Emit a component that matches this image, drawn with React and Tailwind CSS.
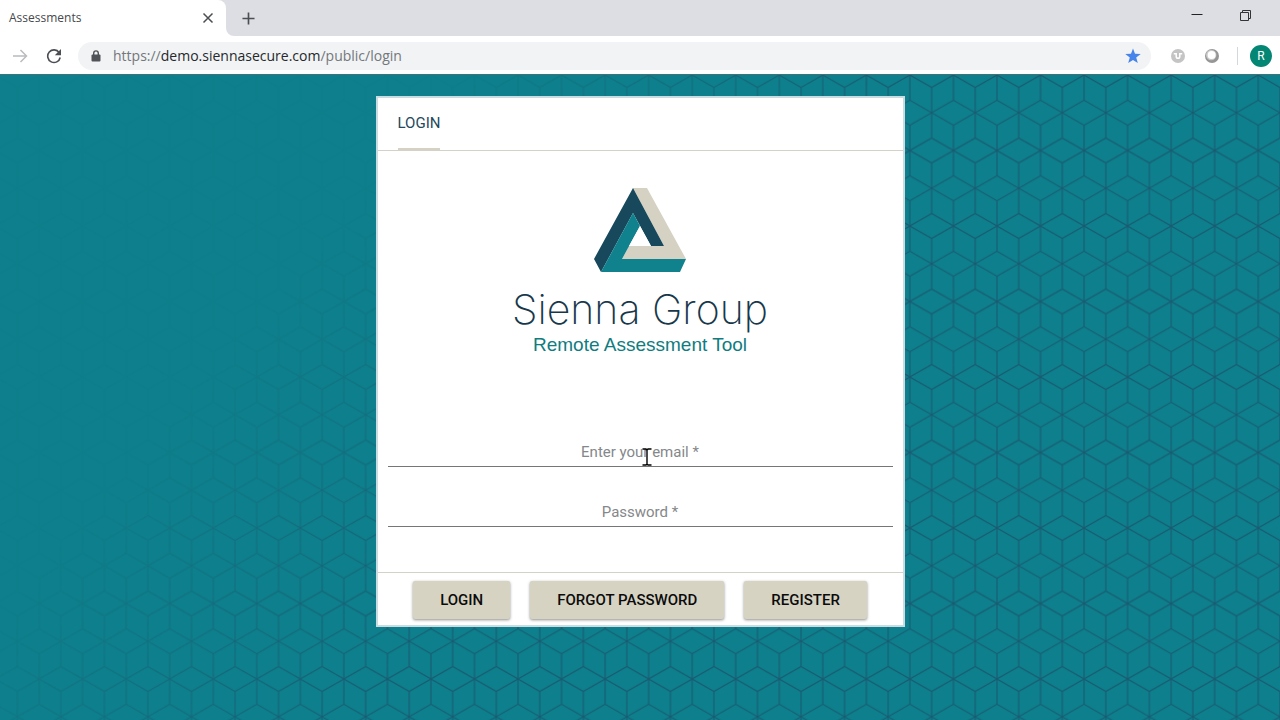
import { useState } from "react";

const ui = "font-['Open_Sans','Noto_Sans',sans-serif]";

function BrowserChrome() {
  return (
    <header className={`relative z-10 ${ui}`}>
      {/* Tab strip */}
      <div className="flex h-9 bg-[#dddee3]">
        <div className="flex w-[226px] items-center justify-between rounded-tr-lg bg-white pl-[9px] pr-[11px]">
          <span className="text-[12px] text-[#45484c]">Assessments</span>
          <button type="button" aria-label="Close tab" className="p-px">
            <svg className="h-3 w-3" viewBox="0 0 12 12" stroke="#4b4e52" strokeWidth="1.5">
              <path d="M1.5 1.5l9 9M10.5 1.5l-9 9" />
            </svg>
          </button>
        </div>
        <div className="flex flex-1 items-center bg-white">
          <div className="flex h-full flex-1 items-center justify-between rounded-bl-lg bg-[#dddee3] pl-4">
            <button type="button" aria-label="New tab">
              <svg className="h-[13px] w-[13px]" viewBox="0 0 14 14" stroke="#4b4e52" strokeWidth="1.8">
                <path d="M7 .5v13M.5 7h13" />
              </svg>
            </button>
            <div className="flex items-center gap-9 pb-1 pr-[29px]">
              <button type="button" aria-label="Minimize">
                <svg className="h-3 w-3" viewBox="0 0 12 12" stroke="#222">
                  <path d="M.5 4.5h11" />
                </svg>
              </button>
              <button type="button" aria-label="Restore">
                <svg className="h-3 w-3" viewBox="0 0 12 12" fill="none" stroke="#333">
                  <path d="M1.5 2.5h8v8h-8zM3.5 2.5v-2h8v8h-2" />
                </svg>
              </button>
            </div>
          </div>
        </div>
      </div>

      {/* Toolbar */}
      <div className="flex h-[39px] items-center border-b border-[#3f7377] bg-white pl-3 pr-2 pt-px">
        <button type="button" aria-label="Forward">
          <svg className="h-4 w-4" viewBox="0 0 16 16" fill="none" stroke="#b9bbbe" strokeWidth="1.5">
            <path d="M1 8h13M8.5 2l6 6-6 6" />
          </svg>
        </button>
        <button type="button" aria-label="Reload" className="ml-[18px]">
          <svg className="h-4 w-4" viewBox="0 0 16 16" fill="none">
            <path d="M13.2 4.6A6.3 6.3 0 1 0 14.2 9.5" stroke="#4b4e52" strokeWidth="1.6" />
            <path d="M15 1v6.2H8.8z" fill="#4b4e52" />
          </svg>
        </button>
        <div className="ml-4 flex h-7 flex-1 items-center rounded-full bg-[#f1f3f5] pl-[13px] pr-[10px]">
          <svg className="h-3 w-[10px]" viewBox="0 0 10 12">
            <path d="M2.7 5V3.2a2.3 2.3 0 0 1 4.6 0V5" fill="none" stroke="#505357" strokeWidth="1.4" />
            <rect x=".5" y="4.4" width="9" height="7.2" rx="1" fill="#505357" />
          </svg>
          <span className="ml-3 flex-1 text-[14px] leading-5 text-[#74777b]">
            https://<span className="text-[#26282b]">demo.siennasecure.com</span>/public/login
          </span>
          <button type="button" aria-label="Bookmark this page">
            <svg className="h-4 w-4" viewBox="0 0 16 16" fill="#4683ea">
              <path d="M8 .4l2 5.4 5.7.2-4.5 3.6 1.6 5.5L8 11.9l-4.8 3.2 1.6-5.5L.3 6l5.7-.2z" />
            </svg>
          </button>
        </div>
        <button type="button" aria-label="Shield extension" className="ml-5">
          <svg className="h-[14px] w-[14px]" viewBox="0 0 14 14">
            <circle cx="7" cy="7" r="7" fill="#c4c4c4" />
            <path d="M2.8 4.8h2.4v2.700a1.8 1.8 0 0 0 3.600 0V4.800h2.400" fill="none" stroke="#fff" strokeWidth="1.5" />
          </svg>
        </button>
        <button type="button" aria-label="Globe extension" className="ml-5">
          <svg className="h-[14px] w-[14px]" viewBox="0 0 14 14">
            <circle cx="7" cy="7" r="7" fill="#959595" />
            <circle cx="6.2" cy="6" r="5.2" fill="#c9c9c9" />
            <circle cx="6.6" cy="6" r="4" fill="#fff" />
          </svg>
        </button>
        <div className="ml-[18px] h-[18px] w-px bg-[#d5d7da]" />
        <button
          type="button"
          className="ml-3 h-[22px] w-[22px] rounded-full bg-[#048674] font-['Roboto',sans-serif] text-[12px] leading-[22px] text-white"
        >
          R
        </button>
      </div>
    </header>
  );
}

// Tumbling-block lines that fade out towards the top left corner
function CubeBackground() {
  return (
    <svg className="absolute inset-0 h-full w-full" aria-hidden="true">
      <defs>
        <pattern id="cubes" x="39.1" y="0" width="43.54" height="75.5" patternUnits="userSpaceOnUse">
          <path
            d="M0 0L21.77 12.5L43.54 0M0 75.5L21.77 63L43.54 75.5M0 25.25L43.54 50.25M0 50.25L43.54 25.25M21.77 12.5V63M0 0V25.25M0 50.25V75.5M43.54 0V25.25M43.54 50.25V75.5"
            fill="none"
            stroke="#1e4b65"
            strokeOpacity="0.7"
            strokeWidth="1.1"
          />
        </pattern>
        <linearGradient id="fade" gradientUnits="userSpaceOnUse" x1="264" y1="224" x2="526" y2="446">
          <stop offset="0" stopColor="#fff" stopOpacity="0.03" />
          <stop offset="1" stopColor="#fff" />
        </linearGradient>
        <mask id="fadeMask">
          <rect width="100%" height="100%" fill="url(#fade)" />
        </mask>
      </defs>
      <rect width="100%" height="100%" fill="url(#cubes)" mask="url(#fadeMask)" />
    </svg>
  );
}

function Logo() {
  return (
    <div className="flex flex-col items-center">
      <svg className="h-[84px] w-[92px]" viewBox="0 0 92 84" aria-hidden="true">
        <path d="M39 0H53L92 71H28L35 58H70z" fill="#d5d2c3" />
        <path d="M39 0L70 58H57L39 25L7 84L0 71z" fill="#17485b" />
        <path d="M39 25L46 38L28 71H92L86 84H7z" fill="#0f828e" />
        <path d="M46 38L57 58H35z" fill="#fff" />
      </svg>
      <h1 className="mt-[15px] font-['Inter',sans-serif] text-[41px] font-extralight leading-[44px] text-[#17384b]">
        Sienna Group
      </h1>
      <p className="mt-[2px] font-['Liberation_Sans',Arial,sans-serif] text-[19px] leading-6 text-[#0f7c80]">
        Remote Assessment Tool
      </p>
    </div>
  );
}

// Label shares the input's grid cell and goes away once something is typed
function Field({ id, label, value, ...props }) {
  return (
    <div className="grid items-center">
      <input
        id={id}
        value={value}
        className="col-start-1 row-start-1 h-[30px] w-full border-b border-[#747678] bg-transparent text-center text-[15px] text-[#333] focus:outline-none"
        {...props}
      />
      {!value && (
        <label
          htmlFor={id}
          className="pointer-events-none col-start-1 row-start-1 text-center text-[15px] leading-5 text-[#85878a]"
        >
          {label} *
        </label>
      )}
    </div>
  );
}

function ActionButton({ children, type = "button" }) {
  return (
    <button
      type={type}
      className="h-[38px] rounded-xs bg-[#d6d3c3] px-[27px] text-[15px] font-medium text-[#0b0b0b] shadow-[0_1px_3px_rgba(0,0,0,0.45)]"
    >
      {children}
    </button>
  );
}

export default function App() {
  const [email, setEmail] = useState("");
  const [password, setPassword] = useState("");

  return (
    <div className="flex min-h-screen flex-col">
      <BrowserChrome />
      <main className="relative flex-1 bg-[#0e7f8c] pt-[21px] font-['Roboto',sans-serif]">
        <CubeBackground />
        <form
          onSubmit={(e) => e.preventDefault()}
          className="relative mx-auto w-full max-w-[529px] border-2 border-[#c9dce2] bg-white"
        >
          <div className="flex border-b border-[#d3d1c8] px-5">
            <button
              type="button"
              className="h-[52px] border-b-2 border-[#d6d2c3] text-[15px] text-[#24485c]"
            >
              LOGIN
            </button>
          </div>

          <div className="px-[10px] pt-[37px] pb-[45px]">
            <Logo />
            <div className="mt-[80px] space-y-[30px]">
              <div className="relative">
                <Field id="email" label="Enter your email" type="email" value={email} onChange={(e) => setEmail(e.target.value)} />
                {/* Text cursor */}
                <svg
                  className="pointer-events-none absolute left-1/2 top-[11px] ml-[2px] h-[18px] w-[10px]"
                  viewBox="0 0 10 18"
                  fill="none"
                  stroke="#000"
                  strokeWidth="1.4"
                >
                  <path d="M.5 1H4l1 1 1-1h3.5M5 2v14M.5 17H4l1-1 1 1h3.5" />
                </svg>
              </div>
              <Field id="password" label="Password" type="password" value={password} onChange={(e) => setPassword(e.target.value)} />
            </div>
          </div>

          <div className="flex justify-center gap-5 border-t border-[#d3d1c8] pt-2 pb-[6px]">
            <ActionButton type="submit">LOGIN</ActionButton>
            <ActionButton>FORGOT PASSWORD</ActionButton>
            <ActionButton>REGISTER</ActionButton>
          </div>
        </form>
      </main>
    </div>
  );
}
